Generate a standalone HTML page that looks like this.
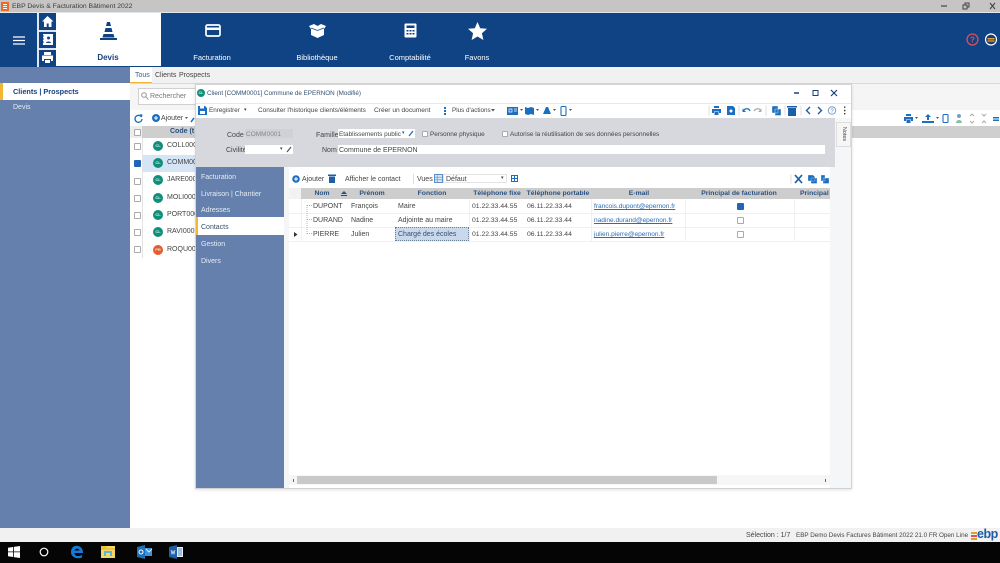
<!DOCTYPE html>
<html lang="fr"><head><meta charset="utf-8"><title>EBP Devis</title>
<style>
html,body{margin:0;padding:0;width:1000px;height:563px;overflow:hidden;background:#fff}
body{position:relative;font-family:"Liberation Sans",sans-serif;font-size:7px;color:#444}
.a{position:absolute}
.t{position:absolute;white-space:nowrap;line-height:10px}
.c{text-align:center;transform:translateX(-50%)}
.b{font-weight:bold}
.w{color:#fff}
.nv{color:#16407f;font-weight:bold}
.cb{position:absolute;width:5px;height:5px;border:1px solid #aaa;background:#fff;border-radius:1px}
.cbk{background:#1f66b8;border-color:#1f66b8}
.cl{position:absolute;left:153px;width:10px;height:10px;border-radius:50%;background:#0f8f79;color:#d8f0ec;font-size:4px;line-height:10px;text-align:center;font-weight:bold}
.ic{fill:#1c6fc0}
svg{position:absolute;overflow:visible}
</style></head><body>

<!-- title bar -->
<div class="a" style="left:0;top:0;width:1000px;height:12px;background:#c6c5c3"></div>
<div class="a" style="left:0;top:12px;width:1000px;height:1px;background:#dfe6ee"></div>
<div class="a" style="left:1px;top:2px;width:8px;height:9px;background:#ea6b26"></div>
<div class="a" style="left:3px;top:4px;width:4px;height:1px;background:#fff"></div>
<div class="a" style="left:3px;top:6px;width:4px;height:1px;background:#fff"></div>
<div class="a" style="left:3px;top:8px;width:4px;height:1px;background:#fff"></div>
<div class="t" style="left:12px;top:2px;font-size:6.800px;color:#3c3c3c">EBP Devis &amp; Facturation Bâtiment 2022</div>
<svg style="left:940px;top:2px" width="60" height="9"><path d="M1 4h6" stroke="#444" stroke-width="1.200"/><path d="M23 3h4v4h-4zM25 3V1h4v4h-2" fill="none" stroke="#444"/><path d="M50 1l5 6M55 1l-5 6" stroke="#444" stroke-width="1.100"/></svg>

<!-- ribbon -->
<div class="a" style="left:0;top:13px;width:1000px;height:54px;background:#0f4384"></div>
<div class="a" style="left:37px;top:13px;width:2px;height:54px;background:#dfe6ee"></div>
<div class="a" style="left:39px;top:30px;width:17px;height:2px;background:#dfe6ee"></div>
<div class="a" style="left:39px;top:48px;width:17px;height:2px;background:#dfe6ee"></div>
<div class="a" style="left:56px;top:13px;width:105px;height:53px;background:#fff"></div>
<svg style="left:13px;top:36px" width="12" height="9"><path d="M0 1h12M0 4.500h12M0 8h12" stroke="#fff" stroke-width="1.300"/></svg>
<svg style="left:41px;top:15px" width="13" height="13"><path d="M6.500 1L1 6.500h2V12h2.700V8.500h2V12H10.500V6.500h2z" fill="#fff"/></svg>
<svg style="left:41px;top:33px" width="13" height="13"><path d="M2 1h10v11H2z" fill="#fff"/><path d="M1 3h2M1 6h2M1 9h2" stroke="#0f4384" stroke-width="1"/><circle cx="7.500" cy="5" r="1.500" fill="#0f4384"/><path d="M5 10c0-2 5-2 5 0z" fill="#0f4384"/></svg>
<svg style="left:41px;top:51px" width="13" height="13"><path d="M3 1h7v3H3zM1 4.500h11V10h-2V8H3v2H1zM4 9h5v3H4z" fill="#fff"/></svg>
<svg style="left:100px;top:22px" width="17" height="18"><path d="M7 0h3l1 4H6zM5.500 6h6l1 4h-8zM3.500 12h10l1 3.500H2.500z" fill="#0f4384"/><path d="M0 16h17v2H0z" fill="#0f4384"/></svg>
<div class="t c nv" style="left:108px;top:53px;font-size:8px">Devis</div>
<svg style="left:205px;top:24px" width="16" height="13"><rect x="1" y="1" width="14" height="11" rx="1.500" fill="none" stroke="#fff" stroke-width="1.700"/><path d="M1 3.500h14v2.500H1z" fill="#fff"/></svg>
<svg style="left:309px;top:24px" width="17" height="14"><path d="M0 2l5-2 3.500 2L12 0l5 2-2 3v6l-6.500 3L2 11V5z" fill="#fff"/><path d="M2 4l6.500 2.500L15 4" fill="none" stroke="#0f4384" stroke-width=".8"/></svg>
<svg style="left:404px;top:23px" width="13" height="15"><rect x="0.500" y="0.500" width="12" height="14" rx="1" fill="#fff"/><path d="M2.500 2.500h8v2.500h-8z" fill="#0f4384"/><path d="M2.500 7h2v1.500h-2zM5.500 7h2v1.500h-2zM8.500 7h2v1.500h-2zM2.500 10h2v1.500h-2zM5.500 10h2v1.500h-2zM8.500 10h2v1.500h-2z" fill="#0f4384"/></svg>
<svg style="left:468px;top:22px" width="19" height="18"><path d="M9.500 0l2.700 6.200 6.800.6-5.100 4.500 1.500 6.700-5.900-3.500L3.600 18l1.500-6.700L0 6.800l6.800-.6z" fill="#fff"/></svg>
<div class="t c w" style="left:212px;top:53px;font-size:7.500px">Facturation</div>
<div class="t c w" style="left:317px;top:53px;font-size:7.500px">Bibliothèque</div>
<div class="t c w" style="left:410px;top:53px;font-size:7.500px">Comptabilité</div>
<div class="t c w" style="left:477px;top:53px;font-size:7.500px">Favons</div>
<svg style="left:965px;top:32px" width="32" height="15"><circle cx="7.500" cy="7.500" r="5.500" fill="none" stroke="#d8505a" stroke-width="1.300"/><text x="7.500" y="10.500" font-family="Liberation Sans" font-size="8" font-weight="bold" fill="#d8505a" text-anchor="middle">?</text><circle cx="26" cy="7.500" r="5.500" fill="#1a3d70" stroke="#fff" stroke-width="1.200"/><path d="M22.500 6h7v1.500h-7z" fill="#e0a030"/><path d="M22.500 8h7v2h-7z" fill="#b87040"/></svg>

<!-- left sidebar -->
<div class="a" style="left:0;top:67px;width:130px;height:461px;background:#6580ad"></div>
<div class="a" style="left:0;top:83px;width:130px;height:17px;background:#fff"></div>
<div class="a" style="left:0;top:83px;width:3px;height:17px;background:#f2b632"></div>
<div class="t nv" style="left:13px;top:87px;font-size:7.300px">Clients | Prospects</div>
<div class="t" style="left:13px;top:103px;color:#e6ecf5">Devis</div>

<!-- main area -->
<div class="a" style="left:130px;top:67px;width:870px;height:16px;background:#f1f1f1"></div>
<div class="a" style="left:130px;top:67px;width:22px;height:16px;background:#fff"></div>
<div class="a" style="left:130px;top:82px;width:22px;height:1px;background:#f2b632"></div>
<div class="a" style="left:130px;top:83px;width:870px;height:1px;background:#d8d8d8"></div>
<div class="a" style="left:130px;top:84px;width:870px;height:26px;background:#f5f5f5"></div>
<div class="t" style="left:135px;top:71px;color:#2f5f96">Tous</div>
<div class="t" style="left:155px;top:71px">Clients</div>
<div class="t" style="left:179px;top:71px">Prospects</div>
<div class="a" style="left:138px;top:88px;width:60px;height:15px;background:#fff;border:1px solid #d0d0d0"></div>
<svg style="left:141px;top:92px" width="8" height="8"><circle cx="3" cy="3" r="2.300" fill="none" stroke="#999"/><path d="M4.700 4.700L7.500 7.500" stroke="#999"/></svg>
<div class="t" style="left:150px;top:92px;color:#777">Rechercher</div>
<div class="a" style="left:130px;top:110px;width:870px;height:16px;background:#fff"></div>
<svg style="left:134px;top:114px" width="9" height="9"><path d="M7.500 3A3.500 3.500 0 1 0 8 5" fill="none" stroke="#1c6fc0" stroke-width="1.300"/><path d="M6 0l2.500.5L8 3.500z" fill="#1c6fc0"/></svg>
<svg style="left:152px;top:114px" width="8" height="8"><circle cx="4" cy="4" r="4" fill="#1c6fc0"/><path d="M4 2v4M2 4h4" stroke="#fff"/></svg>
<div class="t" style="left:161px;top:114px">Ajouter</div>
<svg style="left:185px;top:117px" width="11" height="6"><path d="M0 0h3L1.500 2z" fill="#555"/><path d="M6 5l3-4" stroke="#1c6fc0" stroke-width="1.500"/></svg>

<div class="a" style="left:130px;top:126px;width:870px;height:12px;background:#cfcfcf"></div>
<div class="a" style="left:130px;top:126px;width:12px;height:12px;background:#ededed"></div>
<div class="t b" style="left:170px;top:127px;color:#26507f">Code (t</div>
<div class="a" style="left:142px;top:155px;width:53px;height:17px;background:#d6e5f5"></div>
<div class="a" style="left:142px;top:138px;width:1px;height:120px;background:#e4e4e4"></div>
<div class="cb" style="left:134px;top:129px"></div>
<div class="cb" style="left:134px;top:143px"></div>
<div class="cb cbk" style="left:134px;top:160px"></div>
<div class="cb" style="left:134px;top:178px"></div>
<div class="cb" style="left:134px;top:195px"></div>
<div class="cb" style="left:134px;top:212px"></div>
<div class="cb" style="left:134px;top:229px"></div>
<div class="cb" style="left:134px;top:246px"></div>
<div class="cl" style="top:141px">CL</div><div class="t" style="left:167px;top:141px">COLL0001</div>
<div class="cl" style="top:158px">CL</div><div class="t" style="left:167px;top:158px">COMM000</div>
<div class="cl" style="top:175px">CL</div><div class="t" style="left:167px;top:175px">JARE0001</div>
<div class="cl" style="top:193px">CL</div><div class="t" style="left:167px;top:193px">MOLI0001</div>
<div class="cl" style="top:210px">CL</div><div class="t" style="left:167px;top:210px">PORT0001</div>
<div class="cl" style="top:227px">CL</div><div class="t" style="left:167px;top:227px">RAVI0001</div>
<div class="cl" style="top:245px;background:#ea5a2a">PR</div><div class="t" style="left:167px;top:245px">ROQU000</div>

<!-- right toolbar behind -->
<svg style="left:903px;top:113px" width="97" height="11"><path d="M1 4h9v4H8v-1.500H3V8H1zM3 1h5v2H3zM3.500 7h4v3h-4z" class="ic"/><path d="M12 4h3l-1.500 2z" fill="#555"/><path d="M22 4l3-3 3 3h-2v3h-2V4zM19 8h12v2H19z" class="ic"/><path d="M33 4h3l-1.500 2z" fill="#555"/><rect x="40" y="1.500" width="5" height="8" rx="1" fill="none" stroke="#1c6fc0" stroke-width="1.100"/><circle cx="56" cy="3" r="2" fill="#7a9ec8"/><path d="M53 10c0-4 6-4 6 0z" fill="#8ac0a0"/><path d="M67 3l2-2 2 2M67 8l2 2 2-2M79 1l2 2 2-2M79 10l2-2 2 2" fill="none" stroke="#aaa"/><path d="M90 4h6v1.500h-6zM90 6.500h6V8h-6z" class="ic"/></svg>

<!-- dialog -->
<div class="a" style="left:195px;top:84px;width:657px;height:405px;background:#f5f6f8;border:1px solid #d3d3d3;box-sizing:border-box;box-shadow:0 1px 3px rgba(0,0,0,.12)"></div>
<div class="a" style="left:196px;top:85px;width:655px;height:18px;background:#fff"></div>
<div class="a" style="left:196px;top:103px;width:655px;height:15px;background:#fff;border-top:1px solid #e8e8e8;box-sizing:border-box"></div>
<div class="cl" style="left:197px;top:89px;width:8px;height:8px;line-height:8px;font-size:3.500px">CL</div>
<div class="t" style="left:207px;top:89px;font-size:6.300px;color:#33506f">Client [COMM0001] Commune de EPERNON (Modifié)</div>
<svg style="left:793px;top:89px" width="50" height="9"><path d="M1 4h5" stroke="#16407f" stroke-width="1.500"/><rect x="20" y="1.500" width="5" height="5" fill="none" stroke="#16407f" stroke-width="1"/><path d="M38 1l6 6M44 1l-6 6" stroke="#16407f" stroke-width="1.200"/></svg>

<svg style="left:198px;top:106px" width="9" height="9"><path d="M0 0h7l2 2v7H0z" class="ic"/><path d="M2 0h4v2.500H2zM2 5h5v3H2z" fill="#fff"/></svg>
<div class="t" style="left:209px;top:106px;font-size:6.300px">Enregistrer</div>
<div class="t" style="left:244px;top:105px;font-size:5px">▾</div>
<div class="t" style="left:258px;top:106px;font-size:6.450px">Consulter l'historique clients/éléments</div>
<div class="t" style="left:374px;top:106px;font-size:6.600px">Créer un document</div>
<svg style="left:444px;top:107px" width="2" height="8"><path d="M0 0h2v2H0zM0 3h2v2H0zM0 6h2v2H0z" fill="#1c6fc0"/></svg>
<div class="t" style="left:452px;top:106px;font-size:6.300px">Plus d'actions</div>
<svg style="left:491px;top:109px" width="4" height="3"><path d="M0 0h4L2 2.500z" fill="#555"/></svg>
<svg style="left:507px;top:106px" width="70" height="10"><path d="M0 1h11v8H0z" class="ic"/><path d="M2 3h3v3H2zM7 3h3M7 5h3" stroke="#fff" stroke-width=".7" fill="none"/><path d="M13 3h3l-1.500 2z" fill="#555"/><path d="M18 1l3 1 3-1 3 1v7l-3-1-3 1-3-1z" class="ic"/><path d="M29 3h3l-1.500 2z" fill="#555"/><path d="M36 8l3-7h2l3 7zM39 8h3" class="ic"/><path d="M46 3h3l-1.500 2z" fill="#555"/><rect x="54" y="0.500" width="5" height="9" rx="1" fill="none" stroke="#1c6fc0" stroke-width="1.100"/><path d="M62 3h3l-1.500 2z" fill="#555"/></svg>
<svg style="left:709px;top:105px" width="140" height="11"><path d="M0 .5V10.500" stroke="#ddd"/><path d="M3 4h9v4h-2V6.500H5V8H3zM5 1h5v2H5zM5.500 7h4v3h-4z" class="ic"/><path d="M18 1h6l2 2v7h-8z" class="ic"/><circle cx="22" cy="6" r="1.500" fill="#fff"/><path d="M30 .5V10.500" stroke="#ddd"/><path d="M34 6c2-3 6-3 7 0" fill="none" stroke="#1c6fc0" stroke-width="1.300"/><path d="M33.500 3.500V7H37z" class="ic"/><path d="M45 6c2-3 6-3 7 0" fill="none" stroke="#aaa" stroke-width="1.300"/><path d="M52.500 3.500V7H49z" fill="#aaa"/><path d="M57 .5V10.500" stroke="#ddd"/><path d="M63 1h6v7h-6zM66 4h6v6.500h-6z" class="ic" stroke="#fff" stroke-width=".4"/><path d="M76 .5V10.500" stroke="#ddd"/><path d="M79 3h8v8h-8zM78 1h10v1.500H78z" fill="#1a5fa8"/><path d="M92 .5V10.500" stroke="#ddd"/><path d="M101 2l-3.500 3.500L101 9" fill="none" stroke="#1c5ca8" stroke-width="1.400"/><path d="M109 2l3.500 3.500L109 9" fill="none" stroke="#1c5ca8" stroke-width="1.400"/><circle cx="123" cy="5.500" r="3.700" fill="none" stroke="#7a9ec8"/><text x="123" y="8" font-family="Liberation Sans" font-size="6" fill="#5c86b8" text-anchor="middle">?</text><path d="M135 1.500h1.400v1.400H135zM135 4.800h1.400v1.400H135zM135 8h1.400v1.400H135z" fill="#333"/></svg>

<!-- form -->
<div class="a" style="left:196px;top:118px;width:639px;height:49px;background:#d6d8dd"></div>
<div class="a" style="left:836px;top:122px;width:15px;height:25px;background:#f6f6f6;border:1px solid #ddd;box-sizing:border-box"></div>
<div class="t" style="left:843.500px;top:134px;font-size:5.500px;transform:translate(-50%,-50%) rotate(90deg)">Notes</div>
<div class="t" style="left:227px;top:131px">Code</div>
<div class="a" style="left:245px;top:129px;width:48px;height:9px;background:#cfd1d5"></div>
<div class="t" style="left:246px;top:130px;color:#888;font-size:6.500px">COMM0001</div>
<div class="t" style="left:226px;top:146px">Civilité</div>
<div class="a" style="left:245px;top:145px;width:48px;height:9px;background:#fff"></div>
<div class="t" style="left:280px;top:144px;font-size:5px">▾</div>
<svg style="left:287px;top:146px" width="6" height="7"><path d="M0 6l4-5" stroke="#555" stroke-width="1.200"/></svg>
<div class="t" style="left:316px;top:131px">Famille</div>
<div class="a" style="left:338px;top:129px;width:77px;height:9px;background:#fff"></div>
<div class="t" style="left:339px;top:130px;font-size:6.400px">Etablissements public</div>
<div class="t" style="left:402px;top:128px;font-size:5px;color:#1c5ca8">▾</div>
<svg style="left:409px;top:130px" width="6" height="7"><path d="M0 6l4-5" stroke="#1c6fc0" stroke-width="1.300"/></svg>
<div class="t" style="left:322px;top:146px">Nom</div>
<div class="a" style="left:338px;top:145px;width:487px;height:9px;background:#fff"></div>
<div class="t" style="left:339px;top:146px">Commune de EPERNON</div>
<div class="cb" style="left:422px;top:131px;width:4px;height:4px"></div>
<div class="t" style="left:430px;top:130px;font-size:6.400px">Personne physique</div>
<div class="cb" style="left:502px;top:131px;width:4px;height:4px"></div>
<div class="t" style="left:510px;top:130px;font-size:6.400px">Autorise la réutilisation de ses données personnelles</div>

<!-- left nav in dialog -->
<div class="a" style="left:196px;top:167px;width:88px;height:321px;background:#6580ad"></div>
<div class="a" style="left:197px;top:217px;width:87px;height:18px;background:#fff"></div>
<div class="a" style="left:196px;top:217px;width:2px;height:18px;background:#f2b632"></div>
<div class="t" style="left:201px;top:173px;color:#e6ecf5">Facturation</div>
<div class="t" style="left:201px;top:190px;color:#e6ecf5">Livraison | Chantier</div>
<div class="t" style="left:201px;top:206px;color:#e6ecf5">Adresses</div>
<div class="t" style="left:201px;top:223px;color:#33506f">Contacts</div>
<div class="t" style="left:201px;top:240px;color:#e6ecf5">Gestion</div>
<div class="t" style="left:201px;top:257px;color:#e6ecf5">Divers</div>

<!-- contacts panel -->
<div class="a" style="left:285px;top:167px;width:545px;height:321px;background:#fff"></div>
<div class="a" style="left:285px;top:167px;width:4px;height:321px;background:#f4f5f7"></div>
<svg style="left:292px;top:175px" width="8" height="8"><circle cx="4" cy="4" r="3.800" fill="#1c6fc0"/><path d="M4 2v4M2 4h4" stroke="#fff"/></svg>
<div class="t" style="left:302px;top:175px">Ajouter</div>
<svg style="left:328px;top:174px" width="8" height="9"><path d="M1 2.500h6V9H1zM0 .5h8V2H0z" fill="#1a5fa8"/></svg>
<div class="t" style="left:345px;top:175px">Afficher le contact</div>
<div class="a" style="left:413px;top:174px;width:1px;height:10px;background:#ddd"></div>
<div class="t" style="left:417px;top:175px">Vues</div>
<svg style="left:434px;top:174px" width="9" height="9"><rect x=".5" y=".5" width="8" height="8" fill="#dce8f5" stroke="#5c8fc8"/><path d="M.5 3.200h8M.5 5.800h8M3.200.5v8" stroke="#5c8fc8" stroke-width=".6"/></svg>
<div class="t" style="left:446px;top:175px">Défaut</div>
<div class="a" style="left:443px;top:174px;width:64px;height:9px;border:1px solid #e4e4e4;box-sizing:border-box"></div>
<div class="t" style="left:501px;top:173px;font-size:5px">▾</div>
<svg style="left:511px;top:175px" width="7" height="7"><path d="M.5.5h6v6h-6zM3.500.5v6M.5 3.500h6" fill="none" stroke="#1c6fc0"/></svg>
<svg style="left:790px;top:174px" width="40" height="10"><path d="M1 .5V9.500" stroke="#ddd"/><path d="M5 1l7 8M12 1l-7 8" stroke="#1a5fa8" stroke-width="1.700"/><path d="M18 1h5l2 2v4h-7zM21 4h6v5.500h-6z" class="ic" stroke="#fff" stroke-width=".3"/><path d="M31 1h4v6h-4zM33 4h6v5.500h-6z" class="ic" stroke="#fff" stroke-width=".3"/></svg>

<!-- grid header -->
<div class="a" style="left:301px;top:188px;width:529px;height:11px;background:#cdcdcd"></div>
<div class="a" style="left:289px;top:188px;width:12px;height:11px;background:#f2f2f2"></div>
<div class="t c nv" style="left:322px;top:189px;font-size:6.800px;color:#29517f">Nom</div>
<svg style="left:341px;top:191px" width="6" height="5"><path d="M0 3L3 0l3 3zM0 4h6v1H0z" fill="#29517f"/></svg>
<div class="t c nv" style="left:372px;top:189px;font-size:6.800px;color:#29517f">Prénom</div>
<div class="t c nv" style="left:432px;top:189px;font-size:6.800px;color:#29517f">Fonction</div>
<div class="t c nv" style="left:497px;top:189px;font-size:6.800px;color:#29517f">Téléphone fixe</div>
<div class="t c nv" style="left:558px;top:189px;font-size:6.800px;color:#29517f">Téléphone portable</div>
<div class="t c nv" style="left:639px;top:189px;font-size:6.800px;color:#29517f">E-mail</div>
<div class="t c nv" style="left:739px;top:189px;font-size:6.800px;color:#29517f">Principal de facturation</div>
<div class="t nv" style="left:800px;top:189px;font-size:6.800px;color:#29517f;width:30px;overflow:hidden">Principal de</div>

<!-- grid rows -->
<div class="a" style="left:289px;top:213px;width:541px;height:1px;background:#f0f0f0"></div>
<div class="a" style="left:289px;top:227px;width:541px;height:1px;background:#f0f0f0"></div>
<div class="a" style="left:289px;top:241px;width:541px;height:1px;background:#f0f0f0"></div>
<div class="a" style="left:301px;top:199px;width:1px;height:42px;background:#f0f0f0"></div>
<div class="a" style="left:469px;top:199px;width:1px;height:42px;background:#f0f0f0"></div>
<div class="a" style="left:591px;top:199px;width:1px;height:42px;background:#f0f0f0"></div>
<div class="a" style="left:685px;top:199px;width:1px;height:42px;background:#f0f0f0"></div>
<div class="a" style="left:794px;top:199px;width:1px;height:42px;background:#f0f0f0"></div>
<div class="a" style="left:395px;top:227px;width:74px;height:14px;background:#c9d8ea;outline:1px dotted #6a7f99;outline-offset:-1px"></div>
<svg style="left:306px;top:205px" width="8" height="30"><path d="M1 0v29M1 .5h6M1 14.500h6M1 28.500h6" fill="none" stroke="#999" stroke-width=".7" stroke-dasharray="1 1"/></svg>
<svg style="left:294px;top:232px" width="4" height="5"><path d="M0 0l3.500 2.500L0 5z" fill="#333"/></svg>

<div class="t" style="left:313px;top:202px">DUPONT</div>
<div class="t" style="left:351px;top:202px">François</div>
<div class="t" style="left:398px;top:202px">Maire</div>
<div class="t" style="left:472px;top:202px;font-size:6.800px">01.22.33.44.55</div>
<div class="t" style="left:527px;top:202px;font-size:6.800px">06.11.22.33.44</div>
<div class="t" style="left:594px;top:202px;font-size:6.550px;color:#2c6bb5;text-decoration:underline">francois.dupont@epernon.fr</div>
<div class="cb cbk" style="left:737px;top:203px"></div>

<div class="t" style="left:313px;top:216px">DURAND</div>
<div class="t" style="left:351px;top:216px">Nadine</div>
<div class="t" style="left:398px;top:216px">Adjointe au maire</div>
<div class="t" style="left:472px;top:216px;font-size:6.800px">01.22.33.44.55</div>
<div class="t" style="left:527px;top:216px;font-size:6.800px">06.11.22.33.44</div>
<div class="t" style="left:594px;top:216px;font-size:6.550px;color:#2c6bb5;text-decoration:underline">nadine.durand@epernon.fr</div>
<div class="cb" style="left:737px;top:217px"></div>

<div class="t" style="left:313px;top:230px">PIERRE</div>
<div class="t" style="left:351px;top:230px">Julien</div>
<div class="t" style="left:398px;top:230px;color:#33506f">Chargé des écoles</div>
<div class="t" style="left:472px;top:230px;font-size:6.800px">01.22.33.44.55</div>
<div class="t" style="left:527px;top:230px;font-size:6.800px">06.11.22.33.44</div>
<div class="t" style="left:594px;top:230px;font-size:6.550px;color:#2c6bb5;text-decoration:underline">julien.pierre@epernon.fr</div>
<div class="cb" style="left:737px;top:231px"></div>

<!-- scrollbar -->
<div class="a" style="left:289px;top:475px;width:541px;height:10px;background:#f6f6f6"></div>
<div class="a" style="left:297px;top:476px;width:420px;height:8px;background:#c9c9c9"></div>
<div class="a" style="left:293px;top:479px;width:1px;height:3px;background:#666"></div>
<div class="a" style="left:825px;top:479px;width:1px;height:3px;background:#666"></div>

<!-- status bar -->
<div class="a" style="left:0;top:528px;width:1000px;height:14px;background:#f1f1f1"></div>
<div class="t" style="left:746px;top:530.500px;color:#444">Sélection : 1/7</div>
<div class="t" style="left:796px;top:530.500px;font-size:6.300px;color:#444">EBP Demo Devis Factures Bâtiment 2022 21.0 FR Open Line</div>
<div class="a" style="left:971px;top:532px;width:6px;height:1.500px;background:#e0a030"></div>
<div class="a" style="left:971px;top:535px;width:6px;height:1.500px;background:#e05050"></div>
<div class="a" style="left:971px;top:538px;width:6px;height:1.500px;background:#e0a030"></div>
<div class="t b" style="left:977px;top:527px;font-size:12.500px;line-height:14px;color:#1c5ca8;letter-spacing:-.5px">ebp</div>

<!-- taskbar -->
<div class="a" style="left:0;top:542px;width:1000px;height:21px;background:#050505"></div>
<svg style="left:8px;top:546px" width="12" height="12"><path d="M0 1.700l5-.7v4.500H0zM5.800.9L12 0v5.500H5.800zM0 6.300h5v4.700l-5-.7zM5.800 6.300H12V12l-6.200-.9z" fill="#fff"/></svg>
<svg style="left:39px;top:547px" width="10" height="10"><circle cx="5" cy="5" r="3.800" fill="none" stroke="#fff" stroke-width="1.200"/></svg>
<svg style="left:70px;top:545px" width="14" height="14"><path d="M1 7c0-5 4-7 7-6 3 .5 5 3 5 7H4.500c0 3 4 4 7.500 2v2.500c-5 2-11 0-11-5.500zM4.500 5.500h5C9 3 5.500 3 4.500 5.500z" fill="#1579d6"/></svg>
<svg style="left:101px;top:546px" width="14" height="12"><path d="M0 0h14v12H0z" fill="#f6d664"/><path d="M0 0h5l1 2h8v2H0z" fill="#f0c040"/><path d="M3 5h8v5H3z" fill="#58b8d8"/><path d="M5 7h4v3H5z" fill="#f6d664"/></svg>
<svg style="left:137px;top:545px" width="15" height="14"><path d="M0 2l8-2v14l-8-2z" fill="#1c6fb8"/><path d="M8 3h7v8H8z" fill="#3a94d8"/><circle cx="4" cy="7" r="2" fill="none" stroke="#fff"/><path d="M9 4l3 3 3-3" fill="none" stroke="#fff" stroke-width=".8"/></svg>
<svg style="left:169px;top:545px" width="14" height="14"><path d="M0 2l8-2v14l-8-2z" fill="#1d5fa8"/><path d="M8 2h6v10H8z" fill="#e8eef6"/><path d="M9 4h4M9 6h4M9 8h4M9 10h4" stroke="#5c8fc8"/><path d="M2 5l1 4 1-3 1 3 1-4" fill="none" stroke="#fff" stroke-width=".6"/></svg>
</body></html>
